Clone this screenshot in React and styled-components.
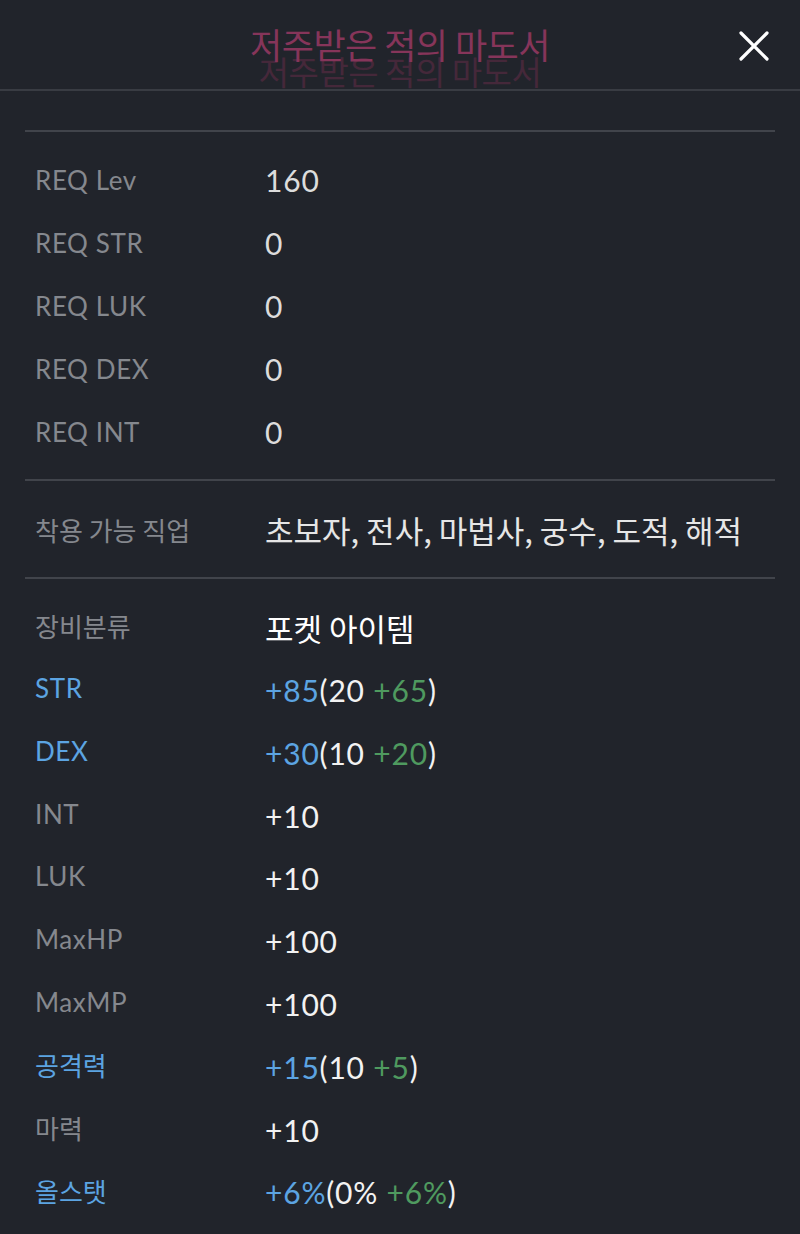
import React from "react";
import styled, { createGlobalStyle } from "styled-components";

const Global = createGlobalStyle`
  html, body { margin: 0; padding: 0; background: #21242b; }
  body { font-family: Lato, "Noto Sans CJK KR", sans-serif; }
`;

const Page = styled.div`
  width: 800px;
  min-height: 1234px;
  background: #21242b;
  overflow: hidden;
`;

const Header = styled.header`
  position: relative;
  height: 89px;
  border-bottom: 2px solid #393c43;
  display: flex;
  justify-content: center;
`;

const TitleWrap = styled.div`
  position: relative;
  margin-top: 21px;
  height: 60px;
  display: flex;
  justify-content: center;
`;

const Title = styled.h1`
  margin: 0;
  font-family: "Noto Sans CJK KR", sans-serif;
  font-weight: 400;
  font-size: 35px;
  line-height: 46px;
  color: #86355a;
  letter-spacing: -0.5px;
  position: relative;
  z-index: 1;
`;

const TitleShadow = styled.span`
  position: absolute;
  top: 29px;
  left: 50%;
  transform: translateX(-50%);
  white-space: nowrap;
  font-family: "Noto Sans CJK KR", sans-serif;
  font-size: 33px;
  line-height: 42px;
  color: #45283a;
  letter-spacing: -0.5px;
`;

const Close = styled.button`
  position: absolute;
  right: 28px;
  top: 28px;
  width: 36px;
  height: 36px;
  padding: 0;
  border: 0;
  background: transparent;
  display: flex;
  align-items: center;
  justify-content: center;
`;

const Body = styled.main`
  padding: 39px 25px 0;
`;

const Section = styled.section`
  border-top: 2px solid #41444b;
  padding: 17px 10px 16px;
`;

const Row = styled.div`
  display: grid;
  grid-template-columns: 230px 1fr;
  align-items: center;
  height: 62.8px;
`;

const Label = styled.div`
  font-size: 26px;
  letter-spacing: ${(p) => (p.$ko ? "0" : "0.6px")};
  color: ${(p) => (p.$blue ? "#5ca4e2" : "#85888e")};
  font-family: ${(p) => (p.$ko ? `"Noto Sans CJK KR", sans-serif` : `Lato, "Noto Sans CJK KR", sans-serif`)};
  transform: translateY(${(p) => (p.$up ? "-2px" : "0")});
  white-space: nowrap;
`;

const Value = styled.div`
  color: ${(p) => p.$color || "#f2f2f2"};
  font-family: ${(p) => (p.$ko ? `"Noto Sans CJK KR", sans-serif` : `Lato, "Noto Sans CJK KR", sans-serif`)};
  font-size: ${(p) => (p.$ko ? "31px" : "30px")};
  letter-spacing: ${(p) => (p.$ko ? "0" : "0.8px")};
  white-space: nowrap;
`;

const Blue = styled.span`
  color: #5ca4e2;
`;
const Green = styled.span`
  color: #4f9a5f;
`;

const reqs = [
  ["REQ Lev", "160"],
  ["REQ STR", "0"],
  ["REQ LUK", "0"],
  ["REQ DEX", "0"],
  ["REQ INT", "0"],
];

const Split = ({ total, base, add }) => (
  <>
    <Blue>{total}</Blue>({base} <Green>{add}</Green>)
  </>
);

const stats = [
  { label: "STR", blue: true, v: <Split total="+85" base="20" add="+65" /> },
  { label: "DEX", blue: true, v: <Split total="+30" base="10" add="+20" /> },
  { label: "INT", v: "+10" },
  { label: "LUK", v: "+10" },
  { label: "MaxHP", v: "+100" },
  { label: "MaxMP", v: "+100" },
  { label: "공격력", ko: true, blue: true, v: <Split total="+15" base="10" add="+5" /> },
  { label: "마력", ko: true, v: "+10" },
  { label: "올스탯", ko: true, blue: true, v: <Split total="+6%" base="0%" add="+6%" /> },
];

export default function App() {
  return (
    <Page>
      <Global />
      <Header>
        <TitleWrap>
          <Title>저주받은 적의 마도서</Title>
          <TitleShadow aria-hidden="true">저주받은 적의 마도서</TitleShadow>
        </TitleWrap>
        <Close aria-label="닫기">
          <svg width="32" height="32" viewBox="0 0 32 32">
            <path d="M3 3 L29 29 M29 3 L3 29" stroke="#ffffff" strokeWidth="3.2" strokeLinecap="round" />
          </svg>
        </Close>
      </Header>
      <Body>
        <Section>
          {reqs.map(([l, v]) => (
            <Row key={l}>
              <Label>{l}</Label>
              <Value $color="#dcdcdc">{v}</Value>
            </Row>
          ))}
        </Section>
        <Section>
          <Row>
            <Label $ko>착용 가능 직업</Label>
            <Value $ko $color="#e6e6e6">초보자, 전사, 마법사, 궁수, 도적, 해적</Value>
          </Row>
        </Section>
        <Section>
          <Row>
            <Label $ko $up>장비분류</Label>
            <Value $ko $color="#ffffff">포켓 아이템</Value>
          </Row>
          {stats.map((s) => (
            <Row key={s.label}>
              <Label $ko={s.ko} $blue={s.blue} $up>
                {s.label}
              </Label>
              <Value>{s.v}</Value>
            </Row>
          ))}
        </Section>
      </Body>
    </Page>
  );
}
